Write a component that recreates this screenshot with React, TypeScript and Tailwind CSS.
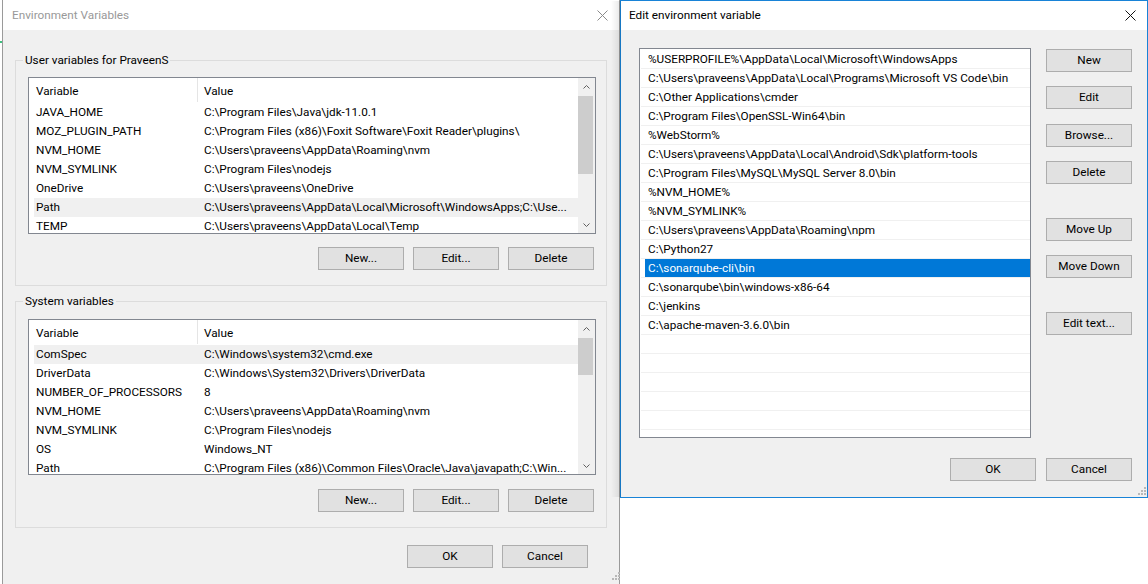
import React from "react";

const userVars: [string, string][] = [
  ["JAVA_HOME", "C:\\Program Files\\Java\\jdk-11.0.1"],
  ["MOZ_PLUGIN_PATH", "C:\\Program Files (x86)\\Foxit Software\\Foxit Reader\\plugins\\"],
  ["NVM_HOME", "C:\\Users\\praveens\\AppData\\Roaming\\nvm"],
  ["NVM_SYMLINK", "C:\\Program Files\\nodejs"],
  ["OneDrive", "C:\\Users\\praveens\\OneDrive"],
  ["Path", "C:\\Users\\praveens\\AppData\\Local\\Microsoft\\WindowsApps;C:\\Use..."],
  ["TEMP", "C:\\Users\\praveens\\AppData\\Local\\Temp"],
];

const systemVars: [string, string][] = [
  ["ComSpec", "C:\\Windows\\system32\\cmd.exe"],
  ["DriverData", "C:\\Windows\\System32\\Drivers\\DriverData"],
  ["NUMBER_OF_PROCESSORS", "8"],
  ["NVM_HOME", "C:\\Users\\praveens\\AppData\\Roaming\\nvm"],
  ["NVM_SYMLINK", "C:\\Program Files\\nodejs"],
  ["OS", "Windows_NT"],
  ["Path", "C:\\Program Files (x86)\\Common Files\\Oracle\\Java\\javapath;C:\\Win..."],
];

const pathEntries = [
  "%USERPROFILE%\\AppData\\Local\\Microsoft\\WindowsApps",
  "C:\\Users\\praveens\\AppData\\Local\\Programs\\Microsoft VS Code\\bin",
  "C:\\Other Applications\\cmder",
  "C:\\Program Files\\OpenSSL-Win64\\bin",
  "%WebStorm%",
  "C:\\Users\\praveens\\AppData\\Local\\Android\\Sdk\\platform-tools",
  "C:\\Program Files\\MySQL\\MySQL Server 8.0\\bin",
  "%NVM_HOME%",
  "%NVM_SYMLINK%",
  "C:\\Users\\praveens\\AppData\\Roaming\\npm",
  "C:\\Python27",
  "C:\\sonarqube-cli\\bin",
  "C:\\sonarqube\\bin\\windows-x86-64",
  "C:\\jenkins",
  "C:\\apache-maven-3.6.0\\bin",
];

function WinButton({ label, className = "" }: { label: string; className?: string }) {
  return (
    <button
      className={`w-[86px] h-[23px] shrink-0 bg-[#e1e1e1] border border-[#adadad] text-[11.75px] leading-none text-black flex items-center justify-center ${className}`}
    >
      {label}
    </button>
  );
}

function CloseIcon({ color }: { color: string }) {
  return (
    <svg width="11" height="11" viewBox="0 0 11 11">
      <path d="M0.5 0.5 L10.5 10.5 M10.5 0.5 L0.5 10.5" stroke={color} strokeWidth="1" />
    </svg>
  );
}

function Chevron({ down }: { down?: boolean }) {
  return (
    <svg width="7" height="4" viewBox="0 0 7 4">
      <path d={down ? "M0.5 0.5 L3.5 3.5 L6.5 0.5" : "M0.5 3.5 L3.5 0.5 L6.5 3.5"} stroke="#606060" fill="none" />
    </svg>
  );
}

function Grip() {
  return (
    <svg width="8" height="8" viewBox="0 0 8 8">
      <rect x="6" y="0" width="2" height="2" fill="#b8b8b8" />
      <rect x="3" y="3" width="2" height="2" fill="#b8b8b8" />
      <rect x="6" y="3" width="2" height="2" fill="#b8b8b8" />
      <rect x="0" y="6" width="2" height="2" fill="#b8b8b8" />
      <rect x="3" y="6" width="2" height="2" fill="#b8b8b8" />
      <rect x="6" y="6" width="2" height="2" fill="#b8b8b8" />
    </svg>
  );
}

function ScrollBar({ thumbTop, thumbHeight }: { thumbTop: number; thumbHeight: number }) {
  return (
    <div className="w-[17px] h-full shrink-0 bg-[#f0f0f0] flex flex-col">
      <div className="h-[17px] shrink-0 flex items-center justify-center">
        <Chevron />
      </div>
      <div className="flex-1">
        <div className="w-[15px] bg-[#cdcdcd]" style={{ marginTop: thumbTop, height: thumbHeight }} />
      </div>
      <div className="h-[17px] shrink-0 flex items-center justify-center">
        <Chevron down />
      </div>
    </div>
  );
}

function VarTable({
  rows,
  selected,
  thumbTop,
  thumbHeight,
  height,
}: {
  rows: [string, string][];
  selected: number;
  thumbTop: number;
  thumbHeight: number;
  height: string;
}) {
  return (
    <div className={`flex w-[568px] ${height} border border-[#828790] bg-white overflow-hidden`}>
      <div className="flex-1 flex flex-col overflow-hidden">
        <div className="flex h-[25px] shrink-0">
          <div className="w-[169px] h-[24px] pl-[7px] pt-[3px] flex items-center border-r border-[#e5e5e5]">Variable</div>
          <div className="pl-[6px] h-[24px] pt-[3px] flex items-center">Value</div>
        </div>
        {rows.map(([name, value], i) => (
          <div
            key={name + i}
            className={`flex h-[19px] shrink-0 items-center ml-[5px] pt-[1px] whitespace-nowrap ${
              i === selected ? "bg-[#f0f0f0]" : ""
            }`}
          >
            <div className="w-[170px] pl-[2px] shrink-0">{name}</div>
            <div>{value}</div>
          </div>
        ))}
      </div>
      <ScrollBar thumbTop={thumbTop} thumbHeight={thumbHeight} />
    </div>
  );
}

function GroupBox({
  label,
  children,
  className = "",
}: {
  label: string;
  children: React.ReactNode;
  className?: string;
}) {
  return (
    <div className={`relative w-[592px] border border-[#dcdcdc] ${className}`}>
      <span className="absolute left-[7px] top-[-9px] px-[2px] h-[16px] leading-[16px] bg-[#f0f0f0]">{label}</span>
      {children}
    </div>
  );
}

export default function App() {
  return (
    <div className="flex items-start w-[1148px] h-[584px] overflow-hidden bg-white font-['Roboto',Arial,sans-serif] text-[11.75px] text-black">
      {/* desktop sliver */}
      <div className="w-[2px] h-full shrink-0 flex flex-col">
        <div className="mt-[41px] h-[2px] bg-[#3fbf7f]" />
      </div>

      {/* Environment Variables window (inactive) */}
      <div className="w-[618px] h-[590px] shrink-0 border-l border-r border-[#9a9a9a] bg-[#f0f0f0] flex flex-col">
        <div className="h-[30px] shrink-0 bg-white flex items-center justify-between pl-[9px] pr-[11px] pt-[1px]">
          <span className="text-[#999999]">Environment Variables</span>
          <CloseIcon color="#8a8a8a" />
        </div>

        <div className="pl-[12px] flex flex-col">
          <GroupBox label="User variables for PraveenS" className="mt-[30px] h-[226px] pt-[16px] pl-[12px]">
            <VarTable rows={userVars} selected={5} thumbTop={1} thumbHeight={78} height="h-[157px]" />
            <div className="mt-[13px] flex gap-[9px] pl-[290px]">
              <WinButton label="New..." />
              <WinButton label="Edit..." />
              <WinButton label="Delete" />
            </div>
          </GroupBox>

          <GroupBox label="System variables" className="mt-[15px] h-[227px] pt-[17px] pl-[12px]">
            <VarTable rows={systemVars} selected={0} thumbTop={1} thumbHeight={37} height="h-[156px]" />
            <div className="mt-[14px] flex gap-[9px] pl-[290px]">
              <WinButton label="New..." />
              <WinButton label="Edit..." />
              <WinButton label="Delete" />
            </div>
          </GroupBox>

          <div className="mt-[17px] flex gap-[9px] pl-[392px]">
            <WinButton label="OK" />
            <WinButton label="Cancel" />
          </div>
          <div className="mt-[4px] pl-[597px]">
            <Grip />
          </div>
        </div>
      </div>

      {/* Edit environment variable window (active) */}
      <div className="relative w-[528px] h-[498px] shrink-0 border border-[#1883d7] bg-[#f0f0f0] flex flex-col">
        <div className="absolute right-full top-0 h-full w-[10px] bg-gradient-to-l from-black/10 to-transparent" />
        <div className="h-[29px] shrink-0 bg-white flex items-center justify-between pl-[8px] pr-[11px]">
          <span>Edit environment variable</span>
          <CloseIcon color="#111111" />
        </div>

        <div className="flex pl-[18px] pt-[18px]">
          <div className="w-[392px] h-[390px] shrink-0 border border-[#828790] bg-white pt-[1px] overflow-hidden">
            {Array.from({ length: 21 }).map((_, i) => {
              const text = pathEntries[i] ?? "";
              const sel = i === 11;
              return (
                <div key={i} className="h-[19px] ml-[1px] border-b border-[#f0f0f0] flex">
                  <div
                    className={`flex-1 ml-[4px] pl-[3px] pt-[2px] flex items-center whitespace-nowrap ${
                      sel ? "bg-[#0078d7] text-white" : ""
                    }`}
                  >
                    {text}
                  </div>
                </div>
              );
            })}
          </div>

          <div className="ml-[15px] pt-[1px] flex flex-col">
            <WinButton label="New" />
            <WinButton label="Edit" className="mt-[14px]" />
            <WinButton label="Browse..." className="mt-[15px]" />
            <WinButton label="Delete" className="mt-[14px]" />
            <WinButton label="Move Up" className="mt-[34px]" />
            <WinButton label="Move Down" className="mt-[14px]" />
            <WinButton label="Edit text..." className="mt-[34px]" />
          </div>
        </div>

        <div className="mt-[20px] flex justify-end gap-[10px] pr-[15px]">
          <WinButton label="OK" className="border-[#0078d7]" />
          <WinButton label="Cancel" />
        </div>
        <div className="mt-[6px] flex justify-end pr-[1px]">
          <Grip />
        </div>
      </div>
    </div>
  );
}
